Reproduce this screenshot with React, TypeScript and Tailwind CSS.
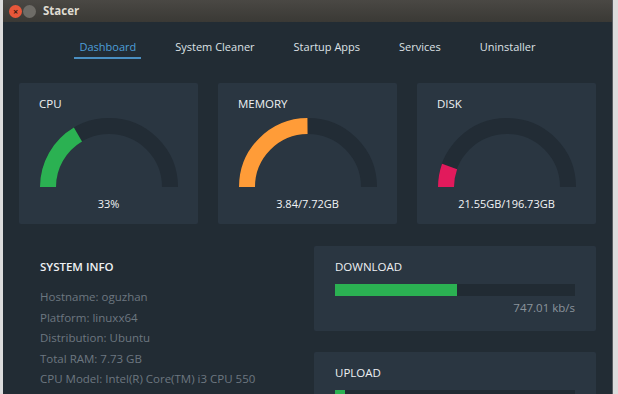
const font = { fontFamily: '"Open Sans", "Noto Sans", sans-serif' };

const tabs = ["Dashboard", "System Cleaner", "Startup Apps", "Services", "Uninstaller"];

const info = [
  "Hostname: oguzhan",
  "Platform: linuxx64",
  "Distribution: Ubuntu",
  "Total RAM: 7.73 GB",
  "CPU Model: Intel(R) Core(TM) i3 CPU 550",
];

function Gauge({ percent, color }: { percent: number; color: string }) {
  const r = 61;
  const a = Math.PI * percent;
  const x = 69 - r * Math.cos(a);
  const y = 69 - r * Math.sin(a);
  return (
    <svg width="138" height="69" viewBox="0 0 138 69" className="mx-auto mt-[6px] block">
      <path d="M 8 69 A 61 61 0 0 1 130 69" fill="none" stroke="#222c35" strokeWidth="16" />
      <path d={`M 8 69 A 61 61 0 0 1 ${x.toFixed(2)} ${y.toFixed(2)}`} fill="none" stroke={color} strokeWidth="16" />
    </svg>
  );
}

function GaugeCard({ title, value, percent, color }: { title: string; value: string; percent: number; color: string }) {
  return (
    <div className="flex-1 h-[141px] bg-[#2a3641] rounded-[2px] pt-[12px] px-[20px]">
      <div className="text-[11.5px] leading-[17px] text-[#eef1f3]">{title}</div>
      <Gauge percent={percent} color={color} />
      <div className="mt-[8px] text-center text-[11px] leading-[17px] font-medium text-[#f2f4f6]">{value}</div>
    </div>
  );
}

function NetCard({ title, fill, speed }: { title: string; fill: number; speed?: string }) {
  return (
    <div className="h-[85px] shrink-0 bg-[#2a3641] rounded-[2px] pt-[12px] px-[21px]">
      <div className="text-[11.5px] leading-[17px] text-[#eef1f3]">{title}</div>
      <div className="mt-[9px] h-[12px] bg-[#212b33]">
        <div className="h-full bg-[#2bb152]" style={{ width: `${fill}%` }} />
      </div>
      {speed && <div className="mt-[3px] text-right text-[11.5px] leading-[17px] text-[#8a949c]">{speed}</div>}
    </div>
  );
}

export default function App() {
  return (
    <div className="w-[618px] h-[394px] overflow-hidden bg-[#dcdcdc] pl-[3px] flex" style={font}>
      <div className="w-[610px] h-full flex flex-col bg-[#222c34] border-r border-[#5a5f63]">
        {/* title bar */}
        <div className="h-[22px] shrink-0 flex items-center gap-[1px] pl-[6px] bg-gradient-to-b from-[#4a4844] to-[#3a3935]">
          <div className="w-[13px] h-[13px] rounded-full bg-[#e8573a] flex items-center justify-center text-[9px] leading-none text-[#3a1a10] font-bold">×</div>
          <div className="w-[13px] h-[13px] rounded-full bg-[#6e6c67]" />
          <div className="ml-[6px] text-[11.5px] font-bold text-[#dfdbd2]">Stacer</div>
        </div>

        {/* nav */}
        <div className="flex justify-center gap-[29px] pt-[16px]">
          {tabs.map((t, i) => (
            <div
              key={t}
              className={`px-[5px] pb-[2px] text-[11px] leading-[17px] border-b-2 ${
                i === 0 ? "text-[#4d9fd9] border-[#4a8fc2]" : "text-[#dde2e6] border-transparent"
              }`}
            >
              {t}
            </div>
          ))}
        </div>

        {/* gauges */}
        <div className="flex gap-5 px-4 mt-[24px]">
          <GaugeCard title="CPU" value="33%" percent={0.33} color="#2bb152" />
          <GaugeCard title="MEMORY" value="3.84/7.72GB" percent={0.4974} color="#ff9c38" />
          <GaugeCard title="DISK" value="21.55GB/196.73GB" percent={0.1095} color="#e21a5c" />
        </div>

        {/* bottom */}
        <div className="flex gap-5 px-4 mt-[22px]">
          <div className="flex-1 pt-[12px] px-[21px]">
            <div className="text-[11.5px] leading-[17px] font-semibold text-[#eef1f3]">SYSTEM INFO</div>
            <div className="mt-[12px] flex flex-col text-[11.5px] leading-[20.5px] text-[#6d7780]">
              {info.map((l) => (
                <div key={l}>{l}</div>
              ))}
            </div>
          </div>
          <div className="w-[282px] flex flex-col gap-[21px]">
            <NetCard title="DOWNLOAD" fill={51} speed="747.01 kb/s" />
            <NetCard title="UPLOAD" fill={4} />
          </div>
        </div>
      </div>
    </div>
  );
}
